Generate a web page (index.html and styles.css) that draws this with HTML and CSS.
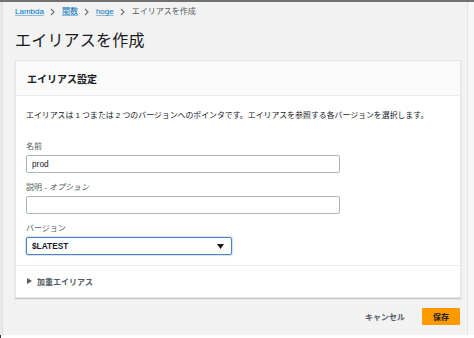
FILE: index.html
```html
<!DOCTYPE html>
<html lang="ja">
<head>
<meta charset="utf-8">
<link rel="stylesheet" href="styles.css">
</head>
<body>
<div class="frame">
  <div class="main">
    <div class="edge-left"></div>
    <div class="content">
      <nav class="crumbs">
        <a class="crumb-link">Lambda</a>
        <svg class="chev" viewBox="0 0 5 8" width="5" height="8"><path d="M1 1 L4 4 L1 7" fill="none" stroke="#687078" stroke-width="1.1"/></svg>
        <a class="crumb-link">関数</a>
        <svg class="chev" viewBox="0 0 5 8" width="5" height="8"><path d="M1 1 L4 4 L1 7" fill="none" stroke="#687078" stroke-width="1.1"/></svg>
        <a class="crumb-link">hoge</a>
        <svg class="chev" viewBox="0 0 5 8" width="5" height="8"><path d="M1 1 L4 4 L1 7" fill="none" stroke="#687078" stroke-width="1.1"/></svg>
        <span class="crumb-current">エイリアスを作成</span>
      </nav>
      <h1 class="title">エイリアスを作成</h1>
      <section class="card">
        <header class="card-head">エイリアス設定</header>
        <div class="card-body">
          <p class="desc">エイリアスは 1 つまたは 2 つのバージョンへのポインタです。エイリアスを参照する各バージョンを選択します。</p>
          <div class="field">
            <label class="label">名前</label>
            <div class="input input-wide">prod</div>
          </div>
          <div class="field">
            <label class="label">説明 - <i>オプション</i></label>
            <div class="input input-wide"></div>
          </div>
          <div class="field">
            <label class="label">バージョン</label>
            <div class="input select"><span class="sel-val">$LATEST</span>
              <svg class="caret" viewBox="0 0 7 5" width="7" height="5"><polygon points="0,0 7,0 3.5,5" fill="#16191f"/></svg>
            </div>
          </div>
        </div>
        <div class="expander">
          <svg class="tri" viewBox="0 0 5 6" width="5" height="6"><polygon points="0,0 5,3 0,6" fill="#545b64"/></svg>
          <span>加重エイリアス</span>
        </div>
      </section>
      <div class="actions">
        <span class="cancel">キャンセル</span>
        <span class="save">保存</span>
      </div>
    </div>
    <div class="edge-right"></div>
  </div>
  <div class="bottom"></div>
</div>
</body>
</html>
```
FILE: styles.css
```css
* { box-sizing: border-box; }
html, body {
  margin: 0;
  padding: 0;
  width: 474px;
  height: 338px;
  overflow: hidden;
  background: #fff;
}
body {
  font-family: "Liberation Sans", "Noto Sans CJK JP", sans-serif;
  color: #16191f;
}
.frame {
  width: 474px;
  height: 338px;
  display: flex;
  flex-direction: column;
  border-top: 2px solid #707070;
}
.main {
  flex: 1;
  display: flex;
  background: #f2f2f2;
}
.edge-left {
  width: 3px;
  background: #e9e9e9;
  border-right: 1px solid #e2e2e2;
}
.edge-right {
  width: 7px;
  background: #f7f7f7;
  border-left: 1px solid #e4e4e4;
}
.content {
  flex: 1;
  padding: 2px 6px 0 12px;
  display: flex;
  flex-direction: column;
}
.crumbs {
  display: flex;
  align-items: center;
  gap: 6px;
  height: 11px;
  font-size: 8px;
  line-height: 11px;
  margin-top: 2px;
}
.crumb-link {
  color: #0073bb;
  text-decoration: underline;
  text-decoration-color: #8cbde0;
}
.chev { display: block; margin: 0 1px 0 0; }
.crumb-current { color: #545b64; }
.title {
  margin: 14px 0 0;
  font-size: 16px;
  line-height: 20px;
  font-weight: normal;
  color: #16191f;
  letter-spacing: 0.2px;
}
.card {
  margin-top: 9px;
  background: #fff;
  border: 1px solid #e3e5e5;
  box-shadow: 0 1px 1px rgba(0,0,0,0.18);
}
.card-head {
  height: 35px;
  display: flex;
  align-items: center;
  padding-left: 11px;
  background: #fafafa;
  border-bottom: 1px solid #eaeded;
  font-size: 10px;
  font-weight: bold;
}
.card-body {
  padding: 15px 10px 10px;
  border-bottom: 1px solid #eaeded;
}
.desc {
  margin: 0;
  font-size: 7.9px;
  line-height: 10px;
  color: #16191f;
  white-space: nowrap;
}
.field {
  display: flex;
  flex-direction: column;
  gap: 3px;
  margin-top: 10px;
}
.field:first-of-type { margin-top: 21px; }
.label {
  font-size: 8px;
  line-height: 10px;
  color: #545b64;
}
.label i { font-style: italic; }
.input {
  height: 18px;
  border: 1px solid #aab7b8;
  border-radius: 2px;
  font-size: 8.3px;
  line-height: 16px;
  padding: 0 5px;
  background: #fff;
  color: #16191f;
}
.input-wide { width: 314px; }
.select {
  width: 206px;
  border-color: #4a84c4;
  box-shadow: 0 0 1px 1px rgba(74,132,196,0.25);
  display: flex;
  align-items: center;
  justify-content: space-between;
  padding-right: 7px;
}
.sel-val { font-weight: bold; }
.caret { display: block; }
.expander {
  height: 31px;
  display: flex;
  align-items: center;
  gap: 5px;
  padding-left: 11px;
  padding-bottom: 1px;
  font-size: 8px;
  font-weight: bold;
  color: #545b64;
}
.tri { display: block; }
.actions {
  display: flex;
  justify-content: flex-end;
  align-items: center;
  gap: 17px;
  margin-top: 10px;
  padding-right: 1px;
}
.cancel {
  font-size: 8px;
  font-weight: bold;
  color: #545b64;
}
.save {
  width: 38px;
  height: 17px;
  display: flex;
  align-items: center;
  justify-content: center;
  background: #ff9900;
  border-radius: 1px;
  font-size: 8px;
  font-weight: bold;
  color: #16191f;
}
.bottom {
  height: 3px;
  background: #fff;
  border-left: 1px solid #333;
}
```
